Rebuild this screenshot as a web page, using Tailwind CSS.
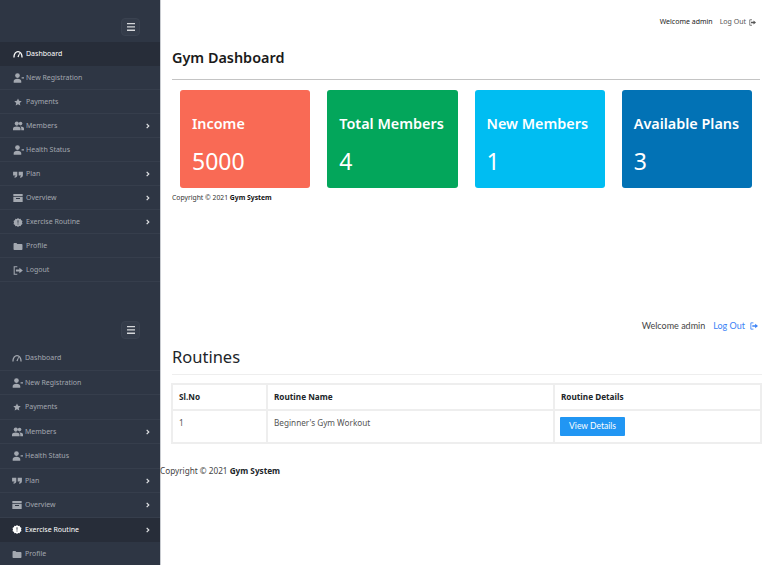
<!DOCTYPE html>
<html lang="en">
<head>
    <meta charset="UTF-8">
    <meta name="viewport" content="width=device-width, initial-scale=1.0">
    <title>Gym System</title>
    <script src="https://cdn.jsdelivr.net/npm/@tailwindcss/browser@4"></script>
</head>
<body class="w-[768px] h-[565px] overflow-hidden bg-white font-['Noto_Sans','Open_Sans',sans-serif]">
    <svg class="hidden">
        <symbol id="i-gauge" viewBox="0 0 16 12"><path fill="none" stroke="currentColor" stroke-width="2" d="M1.500 11.500C1.500 6 4.500 2 8 2s6.500 4 6.500 9.500"/><path fill="currentColor" d="M7 10.500 10.500 4l.8.4L9 11z"/></symbol>
        <symbol id="i-user" viewBox="0 0 16 14"><circle cx="6.500" cy="3.500" r="3.400" fill="currentColor"/><path fill="currentColor" d="M1 14v-2.500C1 9.300 3 8 6.500 8s5.500 1.300 5.500 3.500V14zM12.500 6h3.500v1.800h-3.500z"/></symbol>
        <symbol id="i-star" viewBox="0 0 14 14"><path fill="currentColor" d="M7 .8 8.900 5l4.600.5-3.400 3.100 1 4.500L7 10.800l-4.100 2.300 1-4.500L.5 5.500 5.100 5z"/></symbol>
        <symbol id="i-users" viewBox="0 0 16 14"><circle cx="5.500" cy="3.500" r="3" fill="currentColor"/><circle cx="11" cy="3.500" r="2.600" fill="currentColor"/><path fill="currentColor" d="M0 13v-2c0-2 2.200-3.200 5.500-3.200S11 9 11 11v2zM12 13v-2.500c0-1-.5-2-1.500-2.700 3-.3 5.500.8 5.500 2.900V13z"/></symbol>
        <symbol id="i-quote" viewBox="0 0 14 10"><path fill="currentColor" d="M0 1h6v5c0 2-1.500 3.500-4 3.800V8c1-.2 1.500-.8 1.500-1.500H0zM8 1h6v5c0 2-1.500 3.500-4 3.800V8c1-.2 1.500-.8 1.500-1.500H8z"/></symbol>
        <symbol id="i-box" viewBox="0 0 14 12"><path fill="currentColor" d="M0 0h14v3H0zM0 4h14v8H0zm4 2v1.500h6V6z" fill-rule="evenodd"/></symbol>
        <symbol id="i-badge" viewBox="0 0 14 14"><path fill="currentColor" fill-rule="evenodd" d="M7 0l1.800 1.400L11 1l.8 2.200L14 4.500 13.200 7l.8 2.500-2.200 1.300L11 13l-2.200-.4L7 14l-1.800-1.400L3 13l-.8-2.200L0 9.500.8 7 0 4.500l2.200-1.300L3 1l2.200.4zM6.300 3.500v4h1.400v-4zm0 5v1.500h1.400V8.500z"/></symbol>
        <symbol id="i-folder" viewBox="0 0 14 11"><path fill="currentColor" d="M0 1.500C0 .7.500 0 1.200 0h3.300L6 1.500h6.800c.7 0 1.200.5 1.200 1.200V10c0 .6-.5 1-1.200 1H1.200C.5 11 0 10.600 0 10z"/></symbol>
        <symbol id="i-exit" viewBox="0 0 14 13"><path fill="none" stroke="currentColor" stroke-width="1.500" d="M6 1H1.500v11H6"/><path fill="currentColor" d="M4 5.200h5V2.500l5 4-5 4V7.800H4z"/></symbol>
        <symbol id="i-chev" viewBox="0 0 6 8"><path fill="none" stroke="currentColor" stroke-width="1.800" d="M1 .8 4.200 4 1 7.200"/></symbol>
        <symbol id="i-bars" viewBox="0 0 10 8"><path fill="currentColor" d="M1 0h8v1.300H1zM1 3.300h8v1.300H1zM1 6.600h8v1.300H1z"/></symbol>
    </svg>

    <!-- top screenshot: dashboard -->
    <section class="flex h-[304px]">
        <aside class="w-[161px] shrink-0 bg-[#2e3644] border-r border-[#c9ccd1] text-[#a3a8b0] text-[7px]">
            <div class="h-[42px] flex justify-end items-start pt-[18px] pr-[20px]">
                <span class="w-[19px] h-[18px] flex items-center justify-center rounded-sm bg-[#343c4a] border border-[#3a4250] text-[#d5d7da]"><svg class="w-[10px] h-[8px]"><use href="#i-bars"/></svg></span>
            </div>
            <ul>
                <li class="h-[24px] flex items-center pl-[13px] pr-[10px] bg-[#272d39] text-white"><svg class="w-[10px] h-[8px] mr-[3px]"><use href="#i-gauge"/></svg>Dashboard</li>
                <li class="h-[24px] flex items-center pt-px pl-[13px] pr-[10px] border-b border-[#363e4c]"><svg class="w-[11px] h-[10px] mr-[2px]"><use href="#i-user"/></svg>New Registration</li>
                <li class="h-[24px] flex items-center pt-px pl-[13px] pr-[10px] border-b border-[#363e4c]"><svg class="w-[10px] h-[8px] mr-[3px]"><use href="#i-star"/></svg>Payments</li>
                <li class="h-[24px] flex items-center pt-px pl-[13px] pr-[10px] border-b border-[#363e4c]"><svg class="w-[11px] h-[10px] mr-[2px]"><use href="#i-users"/></svg>Members<svg class="w-[4px] h-[6px] ml-auto text-[#dfe1e4]"><use href="#i-chev"/></svg></li>
                <li class="h-[24px] flex items-center pt-px pl-[13px] pr-[10px] border-b border-[#363e4c]"><svg class="w-[11px] h-[10px] mr-[2px]"><use href="#i-user"/></svg>Health Status</li>
                <li class="h-[24px] flex items-center pt-px pl-[13px] pr-[10px] border-b border-[#363e4c]"><svg class="w-[10px] h-[7px] mr-[3px]"><use href="#i-quote"/></svg>Plan<svg class="w-[4px] h-[6px] ml-auto text-[#dfe1e4]"><use href="#i-chev"/></svg></li>
                <li class="h-[24px] flex items-center pt-px pl-[13px] pr-[10px] border-b border-[#363e4c]"><svg class="w-[10px] h-[8px] mr-[3px]"><use href="#i-box"/></svg>Overview<svg class="w-[4px] h-[6px] ml-auto text-[#dfe1e4]"><use href="#i-chev"/></svg></li>
                <li class="h-[24px] flex items-center pt-px pl-[13px] pr-[10px] border-b border-[#363e4c]"><svg class="w-[10px] h-[9px] mr-[3px]"><use href="#i-badge"/></svg>Exercise Routine<svg class="w-[4px] h-[6px] ml-auto text-[#dfe1e4]"><use href="#i-chev"/></svg></li>
                <li class="h-[24px] flex items-center pt-px pl-[13px] pr-[10px] border-b border-[#363e4c]"><svg class="w-[10px] h-[7px] mr-[3px]"><use href="#i-folder"/></svg>Profile</li>
                <li class="h-[24px] flex items-center pt-px pl-[13px] pr-[10px] border-b border-[#363e4c]"><svg class="w-[10px] h-[9px] mr-[3px]"><use href="#i-exit"/></svg>Logout</li>
            </ul>
        </aside>
        <main class="flex-1 pl-[11px] pr-[8px]">
            <div class="h-[43px] pt-px flex justify-end items-center gap-[7px] pr-[4px] text-[7px]">
                <span class="text-[#222]">Welcome admin</span>
                <span class="flex items-center gap-[3px] text-[#555]">Log Out <svg class="w-[7px] h-[7px]"><use href="#i-exit"/></svg></span>
            </div>
            <h1 class="h-[30px] pb-[6px] box-content flex items-center text-[14.400px] font-semibold text-[#1a1a1a] border-b border-[#c4c4c4]">Gym Dashboard</h1>
            <div class="grid grid-cols-4 gap-[17px] pl-[8px] pr-[8px] pt-[10px]">
                <div class="h-[98px] rounded-[3px] bg-[#f96a55] text-white pl-[12px] pt-[24px]"><p class="text-[14.400px] leading-[20px] font-semibold">Income</p><p class="text-[23px] leading-[32px] mt-[11px]">5000</p></div>
                <div class="h-[98px] rounded-[3px] bg-[#03a65b] text-white pl-[12px] pt-[24px]"><p class="text-[14.400px] leading-[20px] font-semibold whitespace-nowrap">Total Members</p><p class="text-[23px] leading-[32px] mt-[11px]">4</p></div>
                <div class="h-[98px] rounded-[3px] bg-[#00bdf2] text-white pl-[12px] pt-[24px]"><p class="text-[14.400px] leading-[20px] font-semibold whitespace-nowrap">New Members</p><p class="text-[23px] leading-[32px] mt-[11px]">1</p></div>
                <div class="h-[98px] rounded-[3px] bg-[#0272b5] text-white pl-[12px] pt-[24px]"><p class="text-[14.400px] leading-[20px] font-semibold whitespace-nowrap">Available Plans</p><p class="text-[23px] leading-[32px] mt-[11px]">3</p></div>
            </div>
            <p class="mt-[5px] text-[6.800px] leading-[10px] text-[#333]">Copyright © 2021 <b class="text-[#111]">Gym System</b></p>
        </main>
    </section>

    <!-- bottom screenshot: routines -->
    <section class="flex h-[261px]">
        <aside class="w-[161px] shrink-0 bg-[#2e3644] border-r border-[#c9ccd1] text-[#a3a8b0] text-[7px]">
            <div class="h-[42px] flex justify-end items-start pt-[17px] pr-[20px]">
                <span class="w-[19px] h-[18px] flex items-center justify-center rounded-sm bg-[#343c4a] border border-[#3a4250] text-[#d5d7da]"><svg class="w-[10px] h-[8px]"><use href="#i-bars"/></svg></span>
            </div>
            <ul>
                <li class="h-[24.500px] flex items-center pt-px pl-[12px] pr-[10px] border-b border-[#363e4c]"><svg class="w-[10px] h-[8px] mr-[3px]"><use href="#i-gauge"/></svg>Dashboard</li>
                <li class="h-[24.500px] flex items-center pt-px pl-[12px] pr-[10px] border-b border-[#363e4c]"><svg class="w-[11px] h-[10px] mr-[2px]"><use href="#i-user"/></svg>New Registration</li>
                <li class="h-[24.500px] flex items-center pt-px pl-[12px] pr-[10px] border-b border-[#363e4c]"><svg class="w-[10px] h-[8px] mr-[3px]"><use href="#i-star"/></svg>Payments</li>
                <li class="h-[24.500px] flex items-center pt-px pl-[12px] pr-[10px] border-b border-[#363e4c]"><svg class="w-[11px] h-[10px] mr-[2px]"><use href="#i-users"/></svg>Members<svg class="w-[4px] h-[6px] ml-auto text-[#dfe1e4]"><use href="#i-chev"/></svg></li>
                <li class="h-[24.500px] flex items-center pt-px pl-[12px] pr-[10px] border-b border-[#363e4c]"><svg class="w-[11px] h-[10px] mr-[2px]"><use href="#i-user"/></svg>Health Status</li>
                <li class="h-[24.500px] flex items-center pt-px pl-[12px] pr-[10px] border-b border-[#363e4c]"><svg class="w-[10px] h-[7px] mr-[3px]"><use href="#i-quote"/></svg>Plan<svg class="w-[4px] h-[6px] ml-auto text-[#dfe1e4]"><use href="#i-chev"/></svg></li>
                <li class="h-[24.500px] flex items-center pt-px pl-[12px] pr-[10px] border-b border-[#363e4c]"><svg class="w-[10px] h-[8px] mr-[3px]"><use href="#i-box"/></svg>Overview<svg class="w-[4px] h-[6px] ml-auto text-[#dfe1e4]"><use href="#i-chev"/></svg></li>
                <li class="h-[24.500px] flex items-center pl-[12px] pr-[10px] bg-[#272d39] text-white"><svg class="w-[10px] h-[9px] mr-[3px]"><use href="#i-badge"/></svg>Exercise Routine<svg class="w-[4px] h-[6px] ml-auto text-[#dfe1e4]"><use href="#i-chev"/></svg></li>
                <li class="h-[24.500px] flex items-center pl-[12px] pr-[10px]"><svg class="w-[10px] h-[7px] mr-[3px]"><use href="#i-folder"/></svg>Profile</li>
            </ul>
        </aside>
        <main class="flex-1 pr-[7px]">
            <div class="h-[44px] flex justify-end items-center gap-[8px] pr-[4px] text-[9px] font-['Lato',sans-serif]">
                <span class="text-[#444]">Welcome admin</span>
                <span class="flex items-center gap-[5px] text-[#3b82f6]">Log Out <svg class="w-[8px] h-[8px]"><use href="#i-exit"/></svg></span>
            </div>
            <h2 class="ml-[11px] h-[18px] pb-[8px] box-content flex items-center text-[16.500px] text-[#212529] border-b border-[#eeeeee]">Routines</h2>
            <table class="ml-[10px] mt-[8px] w-[591px] table-fixed border-collapse text-[8.200px] text-[#212529]">
                <thead>
                    <tr class="h-[26px] text-left">
                        <th class="w-[95px] pl-[6px] border-2 border-[#eeeeee] font-bold">Sl.No</th>
                        <th class="w-[287px] pl-[6px] border-2 border-[#eeeeee] font-bold">Routine Name</th>
                        <th class="pl-[6px] border-2 border-[#eeeeee] font-bold">Routine Details</th>
                    </tr>
                </thead>
                <tbody>
                    <tr class="h-[33px]">
                        <td class="pl-[6px] pb-[6px] border-2 border-[#eeeeee] text-[#555]">1</td>
                        <td class="pl-[6px] pb-[6px] border-2 border-[#eeeeee] text-[#555]">Beginner's Gym Workout</td>
                        <td class="pl-[5px] border-2 border-[#eeeeee]">
                            <button class="w-[65px] h-[19px] bg-[#2196f3] text-white text-[8.500px] rounded-[1px] font-['Lato',sans-serif]">View Details</button>
                        </td>
                    </tr>
                </tbody>
            </table>
            <p class="-ml-px mt-[21px] text-[8.200px] leading-[12px] text-[#444]">Copyright © 2021 <b class="text-[#212529]">Gym System</b></p>
        </main>
    </section>
</body>
</html>
